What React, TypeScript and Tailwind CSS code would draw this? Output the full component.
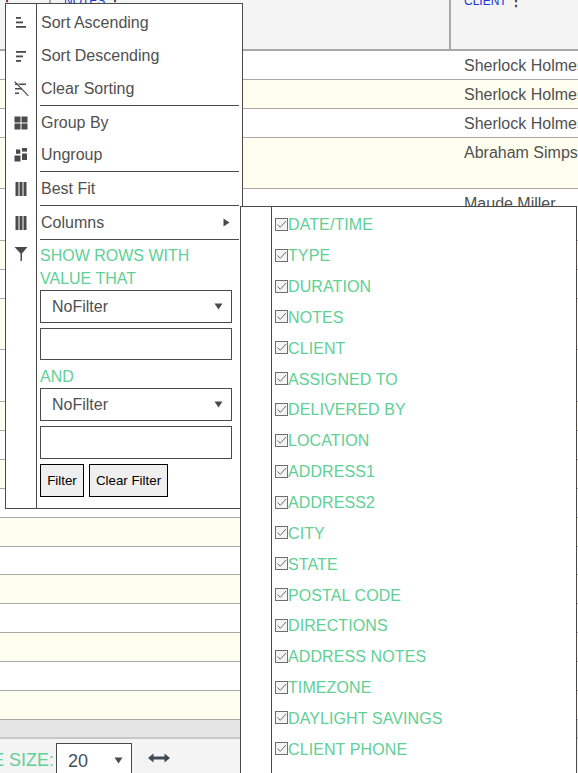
const rowClasses = [
  "h-[29px] bg-white",
  "h-[29px] bg-[#fffff0]",
  "h-[29px] bg-white",
  "h-[51px] bg-[#fffff0]",
  "h-[52px] bg-white",
  "h-[29px] bg-[#fffff0]",
  "h-[29px] bg-white",
  "h-[51px] bg-[#fffff0]",
  "h-[52px] bg-white",
  "h-[29px] bg-[#fffff0]",
  "h-[29px] bg-white",
  "h-[29px] bg-[#fffff0]",
  "h-[29px] bg-white",
  "h-[29px] bg-[#fffff0]",
  "h-[28px] bg-white",
  "h-[29px] bg-[#fffff0]",
  "h-[29px] bg-white",
  "h-[29px] bg-[#fffff0]",
  "h-[29px] bg-white",
  "h-[29px] bg-[#fffff0]",
];
const clients = ["Sherlock Holmes", "Sherlock Holmes", "Sherlock Holmes", "Abraham Simpson", "Maude Miller"];
const columns = [
  "DATE/TIME", "TYPE", "DURATION", "NOTES", "CLIENT", "ASSIGNED TO", "DELIVERED BY", "LOCATION", "ADDRESS1",
  "ADDRESS2", "CITY", "STATE", "POSTAL CODE", "DIRECTIONS", "ADDRESS NOTES", "TIMEZONE", "DAYLIGHT SAVINGS", "CLIENT PHONE",
];

function Bars({ widths }: { widths: number[] }) {
  return (
    <svg width="16" height="16" viewBox="0 0 16 16" fill="#4a4a4a">
      {widths.map((w, i) => (
        <rect key={i} x="3" y={3 + i * 4.5} width={w} height="1.8" />
      ))}
    </svg>
  );
}
const SortAsc = () => <Bars widths={[5, 7, 10]} />;
const SortDesc = () => <Bars widths={[10, 7, 5]} />;
const ClearSort = () => (
  <svg width="16" height="16" viewBox="0 0 16 16" fill="#4a4a4a">
    <rect x="2" y="2.5" width="11" height="1.5" />
    <rect x="2" y="7" width="7" height="1.5" />
    <rect x="2" y="11.5" width="4" height="1.5" />
    <path d="M3 0.5 L16 14" stroke="#fff" strokeWidth="0.9" fill="none" />
    <path d="M2 1 L15 14.5" stroke="#4a4a4a" strokeWidth="1.1" strokeLinecap="square" fill="none" />
  </svg>
);
const GroupIcon = () => (
  <svg width="14" height="14" viewBox="0 0 14 14" fill="#4a4a4a">
    <rect x="0.5" y="0.5" width="6" height="6" />
    <rect x="7.5" y="0.5" width="6" height="6" />
    <rect x="0.5" y="7.5" width="6" height="6" />
    <rect x="7.5" y="7.5" width="6" height="6" />
  </svg>
);
const UngroupIcon = () => (
  <svg className="-mt-[1px]" width="14" height="14" viewBox="0 0 14 14" fill="#4a4a4a">
    <rect x="2" y="1.5" width="4.3" height="4.3" />
    <rect x="8" y="0" width="5" height="3.6" />
    <rect x="0.5" y="7.5" width="6" height="6" />
    <rect x="8" y="5.5" width="5" height="6.5" />
  </svg>
);
const ColumnsIcon = () => (
  <svg width="14" height="16" viewBox="0 0 14 16" fill="#4a4a4a">
    <rect x="1.5" y="1" width="3" height="14" />
    <rect x="5.5" y="1" width="3" height="14" />
    <rect x="9.5" y="1" width="3" height="14" />
  </svg>
);
const FilterIcon = () => (
  <svg width="14" height="16" viewBox="0 0 14 16" fill="#4a4a4a">
    <path d="M0.5 1 H13.5 L8 7.5 V14.5 L6.5 15.5 V7.5 Z" />
  </svg>
);
const Caret = () => (
  <svg width="9" height="7" viewBox="0 0 9 7" fill="#4a4a4a">
    <path d="M0.5 0.5 H8.5 L4.5 6.5 Z" />
  </svg>
);

function MenuRow({
  icon,
  cls,
  sep,
  children,
}: {
  icon: React.ReactNode;
  cls: string;
  sep?: boolean;
  children: React.ReactNode;
}) {
  return (
    <div className={"flex " + cls}>
      <div className="flex w-[31px] shrink-0 items-center justify-center border-r border-[#4a4a4a]">{icon}</div>
      <div className={"flex min-w-0 flex-1 items-center pl-[1px] mx-[3px] pr-[6px] " + (sep ? "border-b border-[#4a4a4a]" : "")}>
        {children}
      </div>
    </div>
  );
}

function FilterSelect() {
  return (
    <div className="flex h-[33px] w-[192px] items-center justify-between border border-[#4a4a4a] bg-white pl-[11px] pr-[8px] text-[16px] text-[#505050]">
      <span>NoFilter</span>
      <Caret />
    </div>
  );
}

export default function App() {
  return (
    <div className="relative h-[773px] w-[578px] overflow-hidden bg-white font-['Liberation_Sans',Arial,sans-serif] text-[16px] text-[#505050]">
      <div className="flex h-[51px] border-b-2 border-[#a8a8a8] bg-[#f4f4f4]">
        <div className="flex w-[51px] justify-end overflow-hidden border-r-2 border-[#a8a8a8] pr-[36px]">
          <span className="-mt-[6px] shrink-0 text-[12px] leading-[14px] whitespace-nowrap text-[#1a35d8]">
            DURATION <span className="font-bold text-[#333]">⋮</span>
          </span>
        </div>
        <div className="flex w-[400px] items-start border-r-2 border-[#a8a8a8] pl-[13px]">
          <span className="-mt-[6px] text-[12px] leading-[14px] text-[#1a35d8]">
            NOTES <span className="font-bold text-[#333]">⋮</span>
          </span>
        </div>
        <div className="flex-1 pl-[13px]">
          <span className="-mt-[6px] block text-[12px] leading-[14px] text-[#1a35d8]">
            CLIENT <span className="font-bold text-[#333]">⋮</span>
          </span>
        </div>
      </div>
      {rowClasses.map((c, i) => (
        <div key={i} className={"flex border-b border-[#a8a8a8] pl-[464px] pt-[5px] leading-[20px] whitespace-nowrap " + c}>
          {clients[i]}
        </div>
      ))}
      <div className="h-[19px] border-b-2 border-[#c8c8c8] bg-[#e4e4e4]" />
      <div className="flex h-[40px] bg-[#f4f4f4] pt-[4px]">
        <div className="flex h-[40px] w-[56px] shrink-0 justify-end overflow-hidden pr-[2px] pt-[7px] text-[18px] leading-[21px] whitespace-nowrap text-[#61d095]">
          PAGE SIZE:
        </div>
        <div className="flex h-[40px] w-[76px] shrink-0 items-start justify-between border border-[#4a4a4a] bg-white pl-[11px] pr-[8px] pt-[7px] text-[18px] leading-[21px]">
          <span className="text-[#44505c]">20</span>
          <span className="pt-[6px]"><Caret /></span>
        </div>
        <svg className="ml-[15px] mt-[9px]" width="24" height="12" viewBox="0 0 24 12" fill="#3f4a54">
          <path d="M1 6 L6.5 1.5 V4.5 H17.5 V1.5 L23 6 L17.5 10.5 V7.5 H6.5 V10.5 Z" />
        </svg>
      </div>

      {/* Column menu */}
      <div className="absolute left-[5px] top-[3px] flex h-[506px] w-[238px] flex-col border border-[#4a4a4a] bg-white">
        <MenuRow cls="h-[35px]" icon={<SortAsc />}><span className="mt-[2px]">Sort Ascending</span></MenuRow>
        <MenuRow cls="h-[33px]" icon={<SortDesc />}>Sort Descending</MenuRow>
        <MenuRow cls="h-[34px]" icon={<ClearSort />} sep>Clear Sorting</MenuRow>
        <MenuRow cls="h-[33px]" icon={<GroupIcon />}>Group By</MenuRow>
        <MenuRow cls="h-[33px]" icon={<UngroupIcon />} sep>Ungroup</MenuRow>
        <MenuRow cls="h-[34px]" icon={<ColumnsIcon />} sep>Best Fit</MenuRow>
        <MenuRow cls="h-[34px]" icon={<ColumnsIcon />} sep>
          <span className="flex-1">Columns</span>
          <svg className="mr-[3px]" width="7" height="9" viewBox="0 0 7 9" fill="#4a4a4a">
            <path d="M0.5 0.5 L6.5 4.5 L0.5 8.5 Z" />
          </svg>
        </MenuRow>
        <div className="flex flex-1">
          <div className="flex w-[31px] shrink-0 justify-center border-r border-[#4a4a4a] pt-[6px]">
            <FilterIcon />
          </div>
          <div className="flex flex-col pl-[3px] pt-[4px] leading-[23px] text-[#61d095]">
            <div className="w-[190px]">SHOW ROWS WITH VALUE THAT</div>
            <FilterSelect />
            <input className="mt-[5px] h-[32px] w-[192px] border border-[#4a4a4a] bg-white" />
            <div className="mt-[5px]">AND</div>
            <FilterSelect />
            <input className="mt-[5px] h-[33px] w-[192px] border border-[#4a4a4a] bg-white" />
            <div className="mt-[5px] flex gap-[5px] text-[13.33px] text-black">
              <button className="h-[33px] w-[44px] border border-black bg-[#efefef]">Filter</button>
              <button className="h-[33px] w-[79px] border border-black bg-[#efefef]">Clear Filter</button>
            </div>
          </div>
        </div>
      </div>

      {/* Columns submenu */}
      <div className="absolute left-[240px] top-[206px] flex h-[600px] w-[337px] border border-[#4a4a4a] bg-white">
        <div className="w-[31px] shrink-0 border-r border-[#4a4a4a]" />
        <div className="flex flex-col pl-[3px] pt-[3px] tracking-[0.1px] text-[#61d095]">
          {columns.map((c) => (
            <div key={c} className="flex h-[30.85px] items-center whitespace-nowrap">
              <span className="-mt-[2px] flex h-[13px] w-[13px] shrink-0 items-center justify-center border border-[#6f6f6f] bg-[#f4f4f4]">
                <svg width="11" height="11" viewBox="0 0 11 11" fill="none" stroke="#6f6f6f" strokeWidth="1">
                  <path d="M1.5 5.5 L4.3 8.3 L10 2" />
                </svg>
              </span>
              <span>{c}</span>
            </div>
          ))}
        </div>
      </div>
    </div>
  );
}
